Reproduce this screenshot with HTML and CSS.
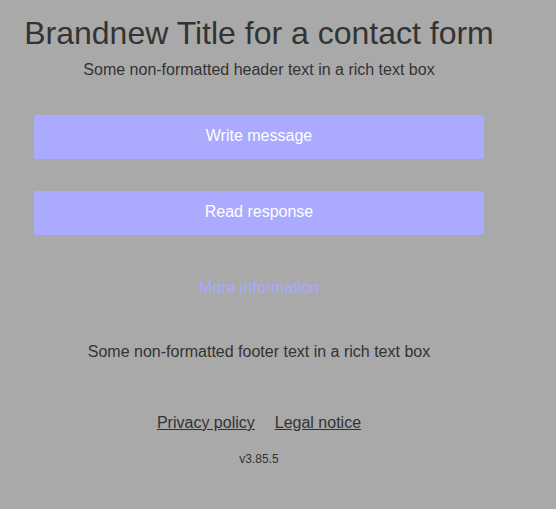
FILE: index.html
```html
<!DOCTYPE html>
<html lang="en">
<head>
<meta charset="utf-8">
<title>Contact form</title>
<link rel="stylesheet" href="styles.css">
</head>
<body>
<main class="page">
  <h1 class="title">Brandnew Title for a contact form</h1>
  <p class="intro">Some non-formatted header text in a rich text box</p>
  <div class="actions">
    <button class="action" type="button">Write message</button>
    <button class="action" type="button">Read response</button>
  </div>
  <a class="more" href="#">More information</a>
  <p class="outro">Some non-formatted footer text in a rich text box</p>
  <nav class="legal">
    <a href="#">Privacy policy</a>
    <a href="#">Legal notice</a>
  </nav>
  <div class="version">v3.85.5</div>
</main>
</body>
</html>
```

FILE: styles.css
```css
html, body {
  margin: 0;
  padding: 0;
  background: #a9a9a9;
}

body {
  font-family: "Liberation Sans", Arial, sans-serif;
  color: #333333;
  min-height: 509px;
}

.page {
  width: 518px;
  display: flex;
  flex-direction: column;
  align-items: center;
  text-align: center;
}

.title {
  margin: 13px 0 0;
  font-size: 32px;
  line-height: 40px;
  font-weight: normal;
  color: #333333;
}

.intro {
  margin: 7px 0 0;
  font-size: 16px;
  line-height: 20px;
}

.actions {
  margin-top: 35px;
  display: flex;
  flex-direction: column;
  gap: 32px;
}

.action {
  width: 450px;
  height: 44px;
  border: none;
  border-radius: 3px;
  background: #aaaaff;
  color: #ffffff;
  font-family: inherit;
  font-size: 16px;
  line-height: 20px;
  padding: 0 0 2px;
  cursor: pointer;
}

.more {
  margin-top: 43px;
  font-size: 16px;
  line-height: 20px;
  color: #aaaaff;
  text-decoration: none;
}

.outro {
  margin: 44px 0 0;
  font-size: 16px;
  line-height: 20px;
}

.legal {
  margin-top: 51px;
  display: flex;
  gap: 20px;
  font-size: 16px;
  line-height: 20px;
}

.legal a {
  color: #333333;
  text-decoration: underline;
}

.version {
  margin-top: 18px;
  font-size: 12px;
  line-height: 16px;
}
```
